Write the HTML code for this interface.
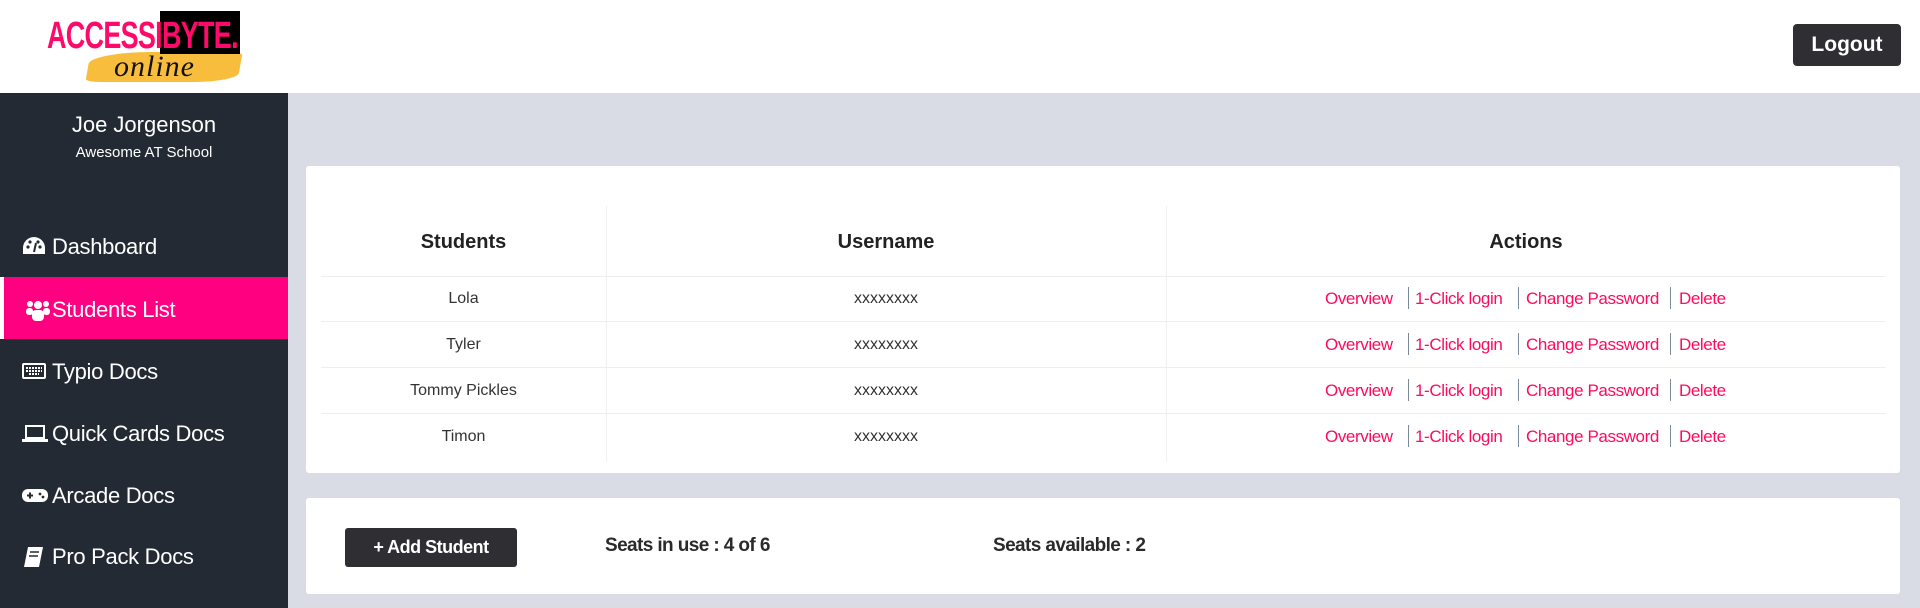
<!DOCTYPE html>
<html><head><meta charset="utf-8"><style>
*{margin:0;padding:0;box-sizing:border-box}
body{width:1920px;height:608px;overflow:hidden;background:#d9dce4;font-family:"Liberation Sans",sans-serif;position:relative;color:#333}
.hdr{position:absolute;left:0;top:0;width:1920px;height:93px;background:#fff}
.logout{position:absolute;left:1793px;top:24px;width:108px;height:42px;background:#2f2f33;border-radius:4px;color:#fff;font-weight:bold;font-size:21px;line-height:42px;text-align:center}
.side{position:absolute;left:0;top:93px;width:288px;height:515px;background:#232a33;color:#fff}
.name{position:absolute;top:19px;width:288px;text-align:center;font-size:22px}
.school{position:absolute;top:51px;width:288px;text-align:center;font-size:15px}
.nav{position:absolute;left:0;width:288px;height:62px;font-size:22px;line-height:66px;padding-left:52px;letter-spacing:-0.3px}
.nav.act{background:#ff0080;border-left:4px solid #fff;padding-left:48px}
.nav svg{position:absolute;left:22px;top:22px}
.card{position:absolute;left:306px;width:1594px;background:#fff;border-radius:3px}
.th{position:absolute;top:231px;font-weight:bold;font-size:20px;text-align:center;color:#222}
.td{position:absolute;font-size:16px;text-align:center;color:#333}
.hl{position:absolute;left:321px;width:1565px;height:1px;background:#eee}
.vl{position:absolute;top:206px;width:1px;height:255px;background:#f0f0f0}
.links{position:absolute;left:1300px;width:450px;height:24px;font-size:17px;color:#ff0a5e;letter-spacing:-0.4px}
.links span{position:absolute;top:0}
.links i{position:absolute;top:-2px;width:1px;height:22px;background:#7a8a99}
</style></head><body>
<div class="hdr">
 <div style="position:absolute;left:88px;top:52px;width:152px;height:30px;background:#f9bd3d;border-radius:40% 10% 30% 10%;transform:skewX(-10deg)"></div>
 <div style="position:absolute;left:160px;top:11px;width:80px;height:43px;background:#000"></div>
 <div style="position:absolute;left:47px;top:17px;font-family:'Liberation Sans Narrow','Liberation Sans',sans-serif;font-weight:bold;font-size:38px;color:#ff0a6a;letter-spacing:-1px;transform:scaleX(0.71);transform-origin:left;line-height:38px">ACCESSIBYTE.</div>
 <div style="position:absolute;left:114px;top:50px;font-family:'Liberation Serif',serif;font-style:italic;font-size:30px;color:#111;letter-spacing:1px">online</div>
 <div class="logout">Logout</div>
</div>
<div class="side">
 <div class="name">Joe Jorgenson</div>
 <div class="school">Awesome AT School</div>
 <div class="nav" style="top:121px"><svg width="24" height="20" viewBox="0 0 24 20"><path d="M12 1A11 11 0 0 0 1 12v6h22v-6A11 11 0 0 0 12 1z" fill="#fff"/><circle cx="6" cy="11" r="1.6" fill="#232a33"/><circle cx="8" cy="6" r="1.6" fill="#232a33"/><circle cx="16" cy="6" r="1.6" fill="#232a33"/><circle cx="18" cy="11" r="1.6" fill="#232a33"/><path d="M12 16l2-9" stroke="#232a33" stroke-width="2"/></svg>Dashboard</div>
 <div class="nav act" style="top:184px"><svg width="24" height="22" viewBox="0 0 24 22"><circle cx="12" cy="6" r="4" fill="#fff"/><circle cx="4" cy="5" r="3" fill="#fff"/><circle cx="20" cy="5" r="3" fill="#fff"/><rect x="6" y="11" width="12" height="11" rx="4" fill="#fff"/><rect x="0" y="9" width="7" height="7" rx="3" fill="#fff"/><rect x="17" y="9" width="7" height="7" rx="3" fill="#fff"/></svg>Students List</div>
 <div class="nav" style="top:246px"><svg width="24" height="20" viewBox="0 0 24 20"><rect x="1" y="3" width="22" height="14" rx="1" fill="none" stroke="#fff" stroke-width="2"/><path d="M4 7h16M4 10h16M7 13h10" stroke="#fff" stroke-width="2" stroke-dasharray="2 1"/></svg>Typio Docs</div>
 <div class="nav" style="top:308px"><svg width="26" height="20" viewBox="0 0 26 20"><rect x="4" y="3" width="18" height="12" fill="none" stroke="#fff" stroke-width="2"/><rect x="0" y="16" width="26" height="3" fill="#fff"/></svg>Quick Cards Docs</div>
 <div class="nav" style="top:370px"><svg width="26" height="20" viewBox="0 0 26 20"><rect x="0" y="4" width="26" height="13" rx="6" fill="#fff"/><path d="M5 10.5h6M8 7.5v6" stroke="#232a33" stroke-width="2"/><circle cx="18" cy="9" r="1.4" fill="#232a33"/><circle cx="21" cy="12" r="1.4" fill="#232a33"/></svg>Arcade Docs</div>
 <div class="nav" style="top:431px"><svg width="22" height="22" viewBox="0 0 22 22"><path d="M6 1h15l-4 20H2z" fill="#fff"/><path d="M8 6h9M7 10h9" stroke="#232a33" stroke-width="1.5"/></svg>Pro Pack Docs</div>
</div>
<div class="card" style="top:166px;height:307px"></div>
<div class="card" style="top:498px;height:96px"></div>
<div class="vl" style="left:606px"></div><div class="vl" style="left:1166px"></div>
<div class="th" style="left:321px;width:285px">Students</div>
<div class="th" style="left:606px;width:560px">Username</div>
<div class="th" style="left:1166px;width:720px">Actions</div>
<div class="hl" style="top:276px"></div><div class="hl" style="top:321px"></div><div class="hl" style="top:367px"></div><div class="hl" style="top:413px"></div>
<div class="td" style="left:321px;width:285px;top:290px">Lola</div>
<div class="td" style="left:321px;width:285px;top:336px">Tyler</div>
<div class="td" style="left:321px;width:285px;top:382px">Tommy Pickles</div>
<div class="td" style="left:321px;width:285px;top:428px">Timon</div>
<div class="td" style="left:606px;width:560px;top:290px">xxxxxxxx</div>
<div class="td" style="left:606px;width:560px;top:336px">xxxxxxxx</div>
<div class="td" style="left:606px;width:560px;top:382px">xxxxxxxx</div>
<div class="td" style="left:606px;width:560px;top:428px">xxxxxxxx</div>
<div class="links" style="top:289px"><span style="left:25px">Overview</span><i style="left:108px"></i><span style="left:115px">1-Click login</span><i style="left:218px"></i><span style="left:226px">Change Password</span><i style="left:370px"></i><span style="left:379px">Delete</span></div>
<div class="links" style="top:335px"><span style="left:25px">Overview</span><i style="left:108px"></i><span style="left:115px">1-Click login</span><i style="left:218px"></i><span style="left:226px">Change Password</span><i style="left:370px"></i><span style="left:379px">Delete</span></div>
<div class="links" style="top:381px"><span style="left:25px">Overview</span><i style="left:108px"></i><span style="left:115px">1-Click login</span><i style="left:218px"></i><span style="left:226px">Change Password</span><i style="left:370px"></i><span style="left:379px">Delete</span></div>
<div class="links" style="top:427px"><span style="left:25px">Overview</span><i style="left:108px"></i><span style="left:115px">1-Click login</span><i style="left:218px"></i><span style="left:226px">Change Password</span><i style="left:370px"></i><span style="left:379px">Delete</span></div>
<div style="position:absolute;left:345px;top:528px;width:172px;height:39px;background:#2f2f33;border-radius:3px;color:#fff;font-weight:bold;font-size:18px;line-height:39px;text-align:center;letter-spacing:-0.5px">+ Add Student</div>
<div style="position:absolute;left:605px;top:535px;font-weight:bold;font-size:19px;color:#2a2a2a;letter-spacing:-0.6px">Seats in use : 4 of 6</div>
<div style="position:absolute;left:993px;top:535px;font-weight:bold;font-size:19px;color:#2a2a2a;letter-spacing:-0.6px">Seats available : 2</div>
</body></html>
